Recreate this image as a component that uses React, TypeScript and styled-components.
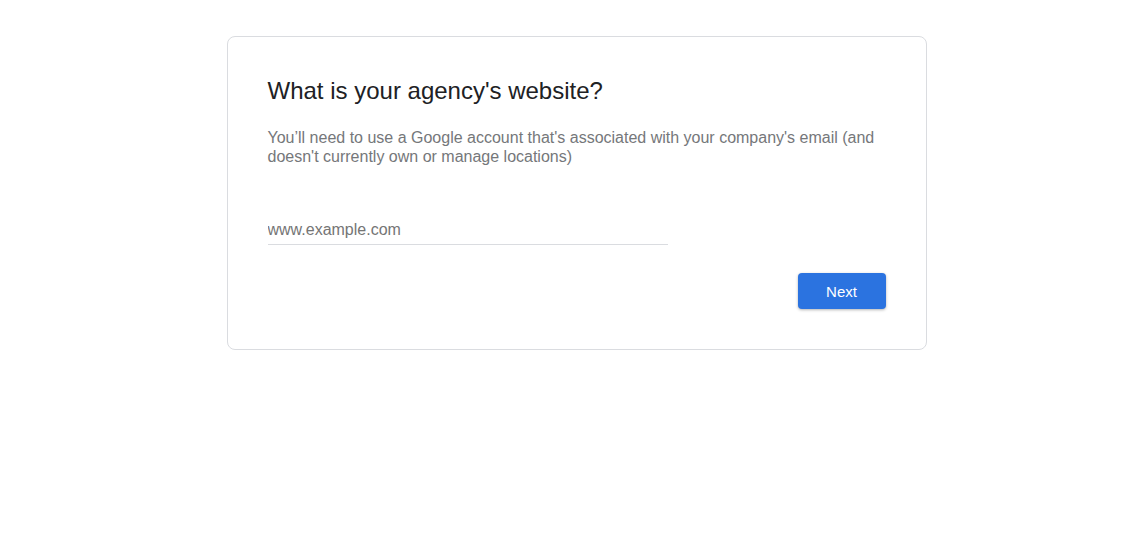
import React from "react";
import styled, { createGlobalStyle } from "styled-components";

const Global = createGlobalStyle`
  html, body { margin: 0; padding: 0; background: #fff; }
  body { font-family: "Liberation Sans", Arial, sans-serif; }
  * { box-sizing: border-box; }
`;

const Page = styled.div`
  display: flex;
  justify-content: center;
  padding: 36px 0 0 30px;
`;

const Card = styled.div`
  width: 700px;
  height: 314px;
  border: 1px solid #dadce0;
  border-radius: 8px;
  padding: 39px 40px 40px 40px;
  display: flex;
  flex-direction: column;
`;

const Title = styled.h1`
  margin: 0;
  font-size: 24px;
  font-weight: 400;
  line-height: 30px;
  color: #202124;
`;

const Description = styled.p`
  margin: 22px 0 0;
  font-size: 16px;
  line-height: 19px;
  color: #75777a;
`;

const Input = styled.input`
  margin-top: 54px;
  width: 400px;
  border: none;
  border-bottom: 1px solid #dadce0;
  padding: 0 0 5px;
  font-family: "Liberation Sans", Arial, sans-serif;
  font-size: 16px;
  line-height: 19px;
  color: #202124;
  outline: none;
  &::placeholder { color: #757575; }
`;

const Actions = styled.div`
  display: flex;
  justify-content: flex-end;
  margin-top: 28px;
`;

const Button = styled.button`
  width: 88px;
  height: 36px;
  border: none;
  border-radius: 4px;
  background: #2b73e0;
  color: #fff;
  font-family: "Liberation Sans", Arial, sans-serif;
  font-size: 15px;
  font-weight: 500;
  box-shadow: 0 1px 3px rgba(0, 0, 0, 0.3);
  cursor: pointer;
`;

export default function App() {
  return (
    <>
      <Global />
      <Page>
        <Card>
          <Title>What is your agency's website?</Title>
          <Description>
            You’ll need to use a Google account that's associated with your company's email (and doesn't currently own or manage locations)
          </Description>
          <Input placeholder="www.example.com" />
          <Actions>
            <Button>Next</Button>
          </Actions>
        </Card>
      </Page>
    </>
  );
}
